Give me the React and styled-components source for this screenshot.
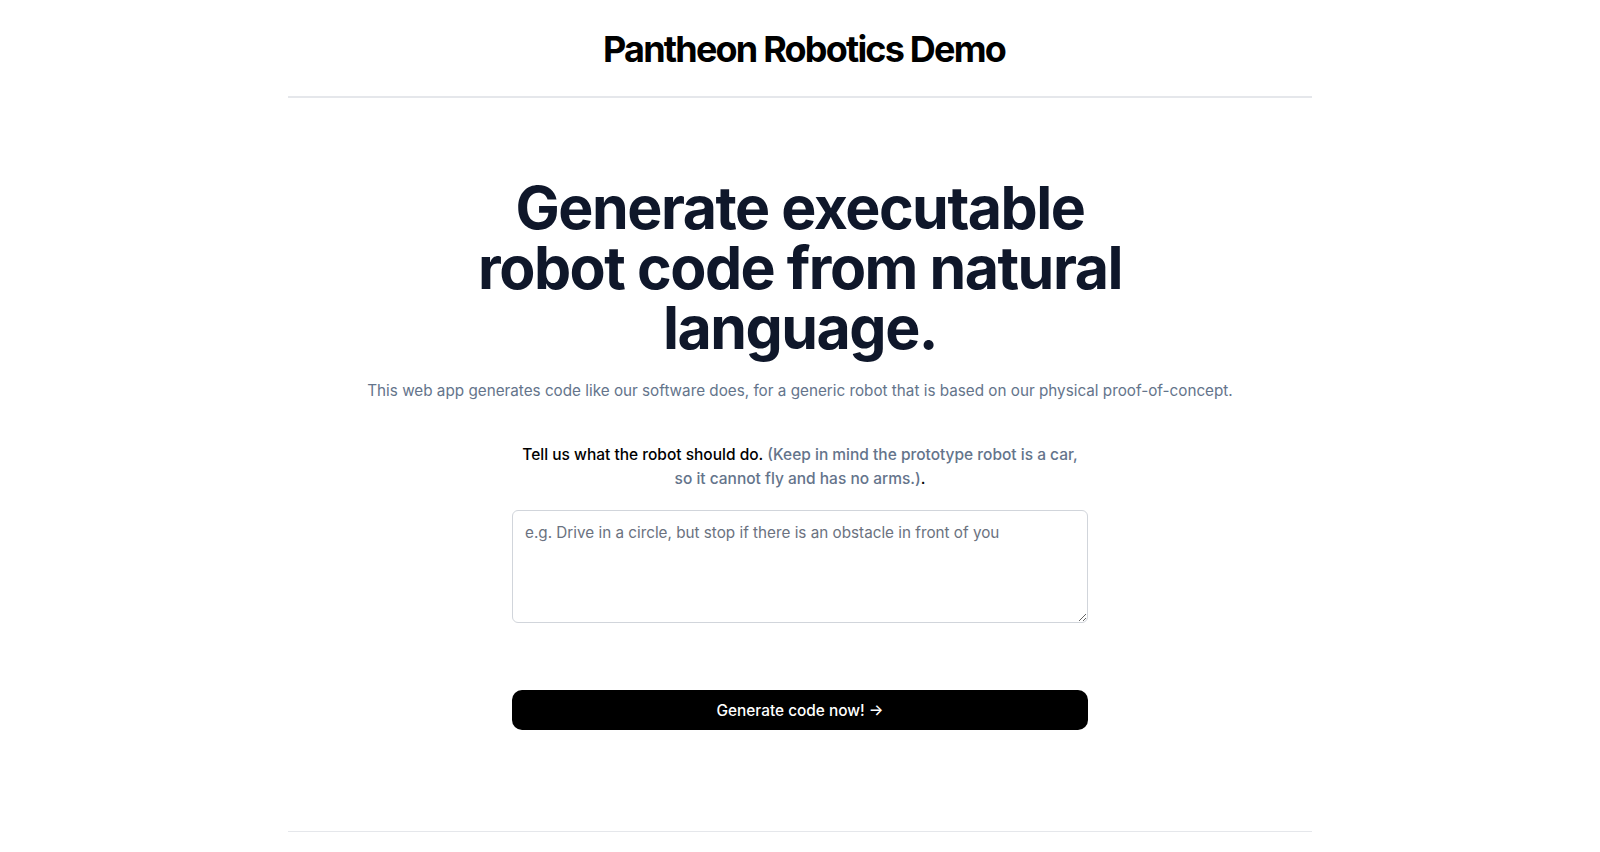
import React from "react";
import styled, { createGlobalStyle } from "styled-components";

const Global = createGlobalStyle`
  * { box-sizing: border-box; }
  html, body { margin: 0; padding: 0; background: #ffffff; }
  body {
    font-family: Inter, "Noto Sans", "Liberation Sans", sans-serif;
    color: #000;
    -webkit-font-smoothing: antialiased;
  }
`;

const Page = styled.div`
  display: flex;
  flex-direction: column;
  min-height: 100vh;
`;

const Header = styled.header`
  width: 100%;
  max-width: 1024px;
  margin: 0 auto;
  padding: 29px 0 27px 8px;
  border-bottom: 2px solid #e5e7eb;
  text-align: center;
`;

const SiteTitle = styled.h1`
  margin: 0;
  font-size: 36px;
  line-height: 40px;
  font-weight: 700;
  letter-spacing: -0.05em;
  color: #000;
`;

const Main = styled.main`
  width: 100%;
  max-width: 1024px;
  margin: 0 auto;
  padding: 80px 0 101px;
  display: flex;
  flex-direction: column;
  align-items: center;
  text-align: center;
`;

const Hero = styled.h2`
  margin: 0;
  max-width: 672px;
  font-size: 59px;
  line-height: 60px;
  font-weight: 700;
  letter-spacing: -0.025em;
  color: #0f172a;
`;

const Lead = styled.p`
  margin: 21px 0 0;
  font-size: 15.25px;
  line-height: 24px;
  color: #64748b;
`;

const Prompt = styled.p`
  margin: 40px 0 0;
  max-width: 576px;
  font-size: 15.5px;
  line-height: 24px;
  font-weight: 500;
  color: #000;
`;

const Hint = styled.span`
  color: #64748b;
`;

const Field = styled.textarea`
  margin-top: 19px;
  width: 576px;
  height: 113px;
  padding: 12px;
  border: 1px solid #d1d5db;
  border-radius: 6px;
  font-family: inherit;
  font-size: 15.25px;
  line-height: 20px;
  color: #0f172a;
  resize: vertical;
  outline: none;
  &::placeholder { color: #6b7280; }
`;

const Action = styled.button`
  margin-top: 67px;
  width: 576px;
  height: 40px;
  border: none;
  border-radius: 10px;
  background: #000;
  color: #fff;
  font-family: inherit;
  font-size: 15.4px;
  font-weight: 500;
  cursor: pointer;
`;

const Footer = styled.footer`
  width: 100%;
  max-width: 1024px;
  margin: 0 auto;
  border-top: 1px solid #e5e7eb;
  height: 60px;
`;

export default function App() {
  return (
    <>
      <Global />
      <Page>
        <Header>
          <SiteTitle>Pantheon Robotics Demo</SiteTitle>
        </Header>
        <Main>
          <Hero>Generate executable robot code from natural language.</Hero>
          <Lead>
            This web app generates code like our software does, for a generic robot that is based on our physical proof-of-concept.
          </Lead>
          <Prompt>
            Tell us what the robot should do.{" "}
            <Hint>(Keep in mind the prototype robot is a car, so it cannot fly and has no arms.)</Hint>.
          </Prompt>
          <Field placeholder="e.g. Drive in a circle, but stop if there is an obstacle in front of you" />
          <Action>Generate code now! →</Action>
        </Main>
        <Footer />
      </Page>
    </>
  );
}
